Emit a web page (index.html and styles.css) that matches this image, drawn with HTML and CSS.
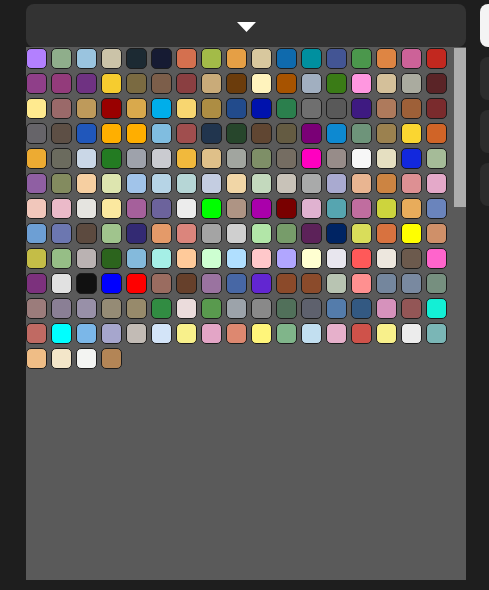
FILE: index.html
```html
<!DOCTYPE html>
<html>
<head>
<meta charset="utf-8">
<link rel="stylesheet" href="styles.css">
</head>
<body>
<div class="app">
  <div class="main">
    <div class="header">
      <svg class="caret" width="19" height="10" viewBox="0 0 19 10"><polygon points="0,0 19,0 9.5,10" fill="#ffffff"/></svg>
    </div>
    <div class="panel">
      <div class="grid" id="grid"></div>
      <div class="scrollbar"><div class="thumb"></div></div>
    </div>
  </div>
  <div class="tabs">
    <div class="tab active"></div>
    <div class="tab"></div>
    <div class="tab"></div>
    <div class="tab"></div>
  </div>
</div>
<script src="script.js"></script>
</body>
</html>
```
FILE: styles.css
```css
html, body {
  margin: 0;
  padding: 0;
  background: #1e1e1e;
  overflow: hidden;
  font-family: "Liberation Sans", Arial, sans-serif;
}
.app {
  display: flex;
  box-sizing: border-box;
  width: 489px;
  height: 590px;
  padding: 4px 0 0 26px;
}
.main {
  display: flex;
  flex-direction: column;
  width: 440px;
  flex: none;
}
.header {
  height: 43px;
  background: #333333;
  border-radius: 8px;
  display: flex;
  align-items: center;
  justify-content: center;
}
.caret {
  margin-top: 2px;
}
.panel {
  height: 533px;
  background: #5a5a5a;
  display: flex;
  padding-top: 1px;
  box-sizing: border-box;
}
.grid {
  flex: 1;
  display: grid;
  grid-template-columns: repeat(17, 21px);
  grid-auto-rows: 21px;
  gap: 4px;
  align-content: start;
}
.sw {
  box-sizing: border-box;
  border: 1px solid #1c1c1c;
  border-radius: 5px;
}
.scrollbar {
  width: 12px;
  flex: none;
}
.thumb {
  height: 159px;
  background: #adadad;
}
.tabs {
  margin-left: 14px;
  display: flex;
  flex-direction: column;
  gap: 10px;
  flex: none;
}
.tab {
  width: 30px;
  height: 43px;
  background: #2c2c2c;
  border-radius: 8px;
}
.tab.active {
  background: #f4f4f4;
}
```
FILE: script.js
```js
var colors = [
"#b380ff","#8fae8b","#9ac4df","#cbc3a8","#1c2a33","#161b33","#d4704f","#a3bb48","#e59f45","#d8c89e","#0f6aad","#00909f","#435594","#4b974c","#de8543","#cc6298","#c2281f",
"#8f3f89","#933b7b","#6f3282","#f6cc2f","#7a6a41","#7c5e4a","#8a3f41","#c9ab79","#6b3c0c","#fff3bd","#a75300","#a1afc0","#3a7b16","#ff97e0","#d4c09a","#aaab9f","#5a2427",
"#ffea8f","#9a6969","#be9a5b","#990000","#d9a94c","#00aeea","#f8d670","#ad8d43","#224b8c","#0012ad","#2b7f4d","#6f6f6f","#595959","#3e1a81","#ae7a5c","#9e6038","#7a2b2d",
"#666469","#5d4f45","#2057bb","#ffaf00","#ffae00","#80bde0","#a04e4e","#21354e","#27462c","#604632","#645b42","#7a0076","#0d89d1","#6e947a","#9b814f","#fad631","#d06427",
"#edab32","#6b6b5e","#cad7e7","#237b22","#9ea2ab","#cacbd0","#f1b93c","#dfc089","#a1a59f","#7e8f67","#756d62","#ff00c0","#978c89","#f7f7f7","#e5dfc1","#1228dd","#a5bb98",
"#8f5fa3","#838b5f","#f6cfa1","#dde5af","#a1c4ea","#b6d4e6","#b6d6d6","#c4cde1","#f1d6a6","#c3d9bd","#c8c2b8","#a9aaaa","#a9aad0","#e9b591","#cc8442","#dd9093","#e4a9c9",
"#f1c7bb","#ebbac9","#e5e4e0","#fbe89f","#a5609b","#6c639c","#ececec","#00ff00","#ae9484","#aa00ab","#790000","#e0b2d0","#56a5b0","#c06d9f","#cdd43d","#e8ac5b","#6a84bc",
"#6d9fd4","#6c77b0","#5c4a3f","#a0c48d","#332a73","#e49a69","#db857c","#a4a4a4","#cfcfcf","#b2e6a8","#779c6a","#5c2259","#002463","#d9dd5a","#d8723f","#ffff00","#cf9069",
"#c4bd47","#96be86","#bab2b2","#2c641d","#84badc","#a5efe6","#ffca9a","#cdffd1","#b0dfff","#ffc8ca","#b1a6ff","#ffffd1","#e8e6ee","#ff5959","#ede7de","#6c5a4d","#ff64cc",
"#7c317d","#e1e1e1","#111111","#0000ff","#ff0000","#9a6c60","#66402b","#9a73a0","#4767a5","#6226d1","#8b4a2a","#8b4b2b","#b8c4b2","#ff9090","#74869d","#7989a0","#768f7f",
"#9b7c7b","#8a7f95","#9890a8","#958b75","#978a6b","#318c42","#ebdcdc","#599a4e","#9ca3aa","#898989","#51705a","#5e616d","#547cab","#335982","#d692bc","#935656","#13efd5",
"#c06a63","#00ffff","#7bb7e8","#a6a6cd","#c2bbb5","#d3e4f8","#f8f08b","#e3a5c6","#dd8870","#fff57a","#80b58a","#c2dff0","#e6b0cb","#cf524a","#f8f08b","#ececec","#7ab6b6",
"#efbd86","#f3e6c9","#f3f4f2","#b38556"
];
var grid = document.getElementById("grid");
colors.forEach(function (c) {
  var d = document.createElement("div");
  d.className = "sw";
  d.style.background = c;
  grid.appendChild(d);
});
```
